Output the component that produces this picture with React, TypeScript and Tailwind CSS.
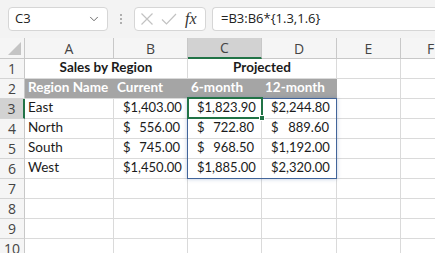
import { ChevronDown } from "lucide-react";

const cols = [
  { key: "A", w: "w-[89px]" },
  { key: "B", w: "w-[74px]" },
  { key: "C", w: "w-[74px]" },
  { key: "D", w: "w-[75px]" },
  { key: "E", w: "w-[64px]" },
  { key: "F", w: "w-[60px]" },
];

const data = [
  ["East", "1,403.00", "1,823.90", "2,244.80"],
  ["North", "556.00", "722.80", "889.60"],
  ["South", "745.00", "968.50", "1,192.00"],
  ["West", "1,450.00", "1,885.00", "2,320.00"],
];

const cellFont = "font-['Lato','Liberation_Sans',sans-serif] text-[#1b1b1b]";

function RowHead({ n, active }: { n: number; active?: boolean }) {
  return (
    <div
      className={`flex h-full w-[25px] shrink-0 items-center justify-center border-b border-[#d4d4d4] text-[14px] text-[#444] ${
        active ? "border-r-2 border-r-[#217346] bg-[#d2d2d2]" : "border-r border-r-[#c8c8c8] bg-[#f5f5f5]"
      }`}
    >
      {n}
    </div>
  );
}

function Money({ value, w }: { value: string; w: string }) {
  return (
    <div className={`${w} flex h-full shrink-0 items-end border-r border-b border-[#dadada] pb-[1px] pl-[9px] pr-[7px] text-[13px] ${cellFont}`}>
      <span className="shrink-0">$</span>
      <span className="flex-1 text-right">{value}</span>
    </div>
  );
}

function Blank({ w }: { w: string }) {
  return <div className={`${w} h-full shrink-0 border-r border-b border-[#dadada]`} />;
}

export default function App() {
  return (
    <div className="relative h-[253px] w-[435px] overflow-hidden bg-white font-['Open_Sans','Noto_Sans',sans-serif]">
      {/* formula bar */}
      <div className="flex h-[38px] items-center gap-[6px] bg-[#f3f3f3] pl-[8px]">
        <div className="flex h-[24px] w-[100px] items-center justify-between rounded-[4px] border border-[#d6d6d6] bg-white pl-[6px] pr-[6px] text-[13px] text-[#222]">
          <span>C3</span>
          <ChevronDown size={14} strokeWidth={1.5} className="text-[#555]" />
        </div>
        <div className="flex w-[14px] flex-col items-center gap-[2px]">
          <span className="h-[2px] w-[2px] rounded-full bg-[#999]" />
          <span className="h-[2px] w-[2px] rounded-full bg-[#999]" />
          <span className="h-[2px] w-[2px] rounded-full bg-[#999]" />
        </div>
        <div className="flex h-[24px] w-[72px] items-center rounded-[4px] border border-[#d6d6d6] bg-white pl-[5px]">
          <svg width="14" height="14" viewBox="0 0 14 14">
            <path d="M1.5 1.5 L12.5 12.5 M12.5 1.5 L1.5 12.5" stroke="#c2c2c2" strokeWidth="1.2" fill="none" />
          </svg>
          <svg width="16" height="14" viewBox="0 0 16 14" className="ml-[7px]">
            <path d="M1 7.5 L5.5 12 L15 2" stroke="#c2c2c2" strokeWidth="1.2" fill="none" />
          </svg>
          <span className="ml-[8px] font-['Liberation_Serif',serif] text-[16px] italic text-[#333]">fx</span>
        </div>
        <div className="flex h-[24px] flex-1 items-center rounded-l-[4px] border border-r-0 border-[#d6d6d6] bg-white pl-[8px] text-[13px] text-[#222]">
          =B3:B6*{"{"}1.3,1.6{"}"}
        </div>
      </div>

      {/* column headers */}
      <div className="flex h-[21px] bg-[#f5f5f5]">
        <div className="relative w-[25px] shrink-0 border-r border-b border-[#c8c8c8]">
          <svg width="13" height="13" viewBox="0 0 13 13" className="absolute right-[3px] bottom-[3px]">
            <path d="M13 0 L13 13 L0 13 Z" fill="#c4c4c4" />
          </svg>
        </div>
        {cols.map((c) => (
          <div
            key={c.key}
            className={`${c.w} flex shrink-0 items-center justify-center text-[14px] text-[#444] ${
              c.key === "C"
                ? "border-r border-r-[#c8c8c8] border-b-2 border-b-[#217346] bg-[#d2d2d2]"
                : "border-r border-b border-[#c8c8c8]"
            }`}
          >
            {c.key}
          </div>
        ))}
      </div>

      {/* row 1 */}
      <div className="flex h-[20px]">
        <RowHead n={1} />
        <div className={`flex h-full w-[163px] shrink-0 items-end justify-center border-r border-b border-[#dadada] pb-[1px] text-[13.5px] font-bold ${cellFont}`}>
          Sales by Region
        </div>
        <div className={`flex h-full w-[149px] shrink-0 items-end justify-center border-r border-b border-[#dadada] pb-[1px] text-[13.5px] font-bold ${cellFont}`}>
          Projected
        </div>
        <Blank w="w-[64px]" />
        <Blank w="w-[60px]" />
      </div>

      {/* row 2 */}
      <div className="flex h-[20px]">
        <RowHead n={2} />
        <div className="flex h-full w-[312px] shrink-0 border-b border-[#dadada] bg-[#a5a5a5] font-['Lato','Liberation_Sans',sans-serif] text-[13.5px] font-bold text-white">
          <div className="flex w-[89px] items-end pb-[1px] pl-[3px]">Region Name</div>
          <div className="flex w-[74px] items-end pb-[1px] pl-[3px]">Current</div>
          <div className="flex w-[74px] items-end pb-[1px] pl-[3px]">6-month</div>
          <div className="flex w-[75px] items-end pb-[1px] pl-[3px]">12-month</div>
        </div>
        <Blank w="w-[64px]" />
        <Blank w="w-[60px]" />
      </div>

      {/* data rows */}
      {data.map((r, i) => (
        <div key={r[0]} className="flex h-[20px]">
          <RowHead n={i + 3} active={i === 0} />
          <div className={`flex h-full w-[89px] shrink-0 items-end border-r border-b border-[#dadada] pb-[1px] pl-[3px] text-[13.5px] ${cellFont}`}>
            {r[0]}
          </div>
          <Money value={r[1]} w="w-[74px]" />
          <Money value={r[2]} w="w-[74px]" />
          <Money value={r[3]} w="w-[75px]" />
          <Blank w="w-[64px]" />
          <Blank w="w-[60px]" />
        </div>
      ))}

      {/* empty rows */}
      {[7, 8, 9, 10].map((n) => (
        <div key={n} className="flex h-[20px]">
          <RowHead n={n} />
          {cols.map((c) => (
            <Blank key={c.key} w={c.w} />
          ))}
        </div>
      ))}

      {/* spill range outline */}
      <div className="pointer-events-none absolute top-[98px] left-[187px] h-[81px] w-[150px] border border-[#42659a] shadow-[0_0_4px_rgba(66,101,154,0.35)]" />
      {/* active cell */}
      <div className="pointer-events-none absolute top-[97px] left-[187px] h-[22px] w-[76px] border-2 border-[#217346]" />
      <div className="pointer-events-none absolute top-[115px] left-[259px] h-[6px] w-[6px] border border-white bg-[#217346]" />
    </div>
  );
}
